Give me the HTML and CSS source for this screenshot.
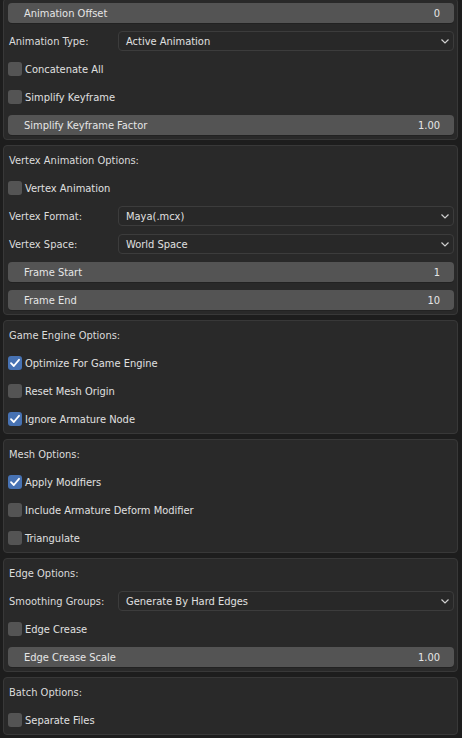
FILE: index.html
```html
<!DOCTYPE html>
<html>
<head>
<meta charset="utf-8">
<link rel="stylesheet" href="styles.css">
</head>
<body>
<div class="panel">
  <div class="box first">
    <div class="row"><div class="num"><span>Animation Offset</span><span>0</span></div></div>
    <div class="row"><span class="label">Animation Type:</span><div class="select"><span>Active Animation</span><svg class="chev" width="8" height="5" viewBox="0 0 8 5"><polyline points="0.5,0.5 4,4 7.5,0.5" /></svg></div></div>
    <div class="row"><span class="cb"></span><span class="cbl">Concatenate All</span></div>
    <div class="row"><span class="cb"></span><span class="cbl">Simplify Keyframe</span></div>
    <div class="row"><div class="num"><span>Simplify Keyframe Factor</span><span>1.00</span></div></div>
  </div>
  <div class="box">
    <div class="row"><span class="head">Vertex Animation Options:</span></div>
    <div class="row"><span class="cb"></span><span class="cbl">Vertex Animation</span></div>
    <div class="row"><span class="label">Vertex Format:</span><div class="select"><span>Maya(.mcx)</span><svg class="chev" width="8" height="5" viewBox="0 0 8 5"><polyline points="0.5,0.5 4,4 7.5,0.5" /></svg></div></div>
    <div class="row"><span class="label">Vertex Space:</span><div class="select"><span>World Space</span><svg class="chev" width="8" height="5" viewBox="0 0 8 5"><polyline points="0.5,0.5 4,4 7.5,0.5" /></svg></div></div>
    <div class="row"><div class="num"><span>Frame Start</span><span>1</span></div></div>
    <div class="row"><div class="num"><span>Frame End</span><span>10</span></div></div>
  </div>
  <div class="box">
    <div class="row"><span class="head">Game Engine Options:</span></div>
    <div class="row"><span class="cb on"><svg width="14" height="14" viewBox="0 0 14 14"><polyline points="3,7.2 5.8,10 11,3.8" /></svg></span><span class="cbl">Optimize For Game Engine</span></div>
    <div class="row"><span class="cb"></span><span class="cbl">Reset Mesh Origin</span></div>
    <div class="row"><span class="cb on"><svg width="14" height="14" viewBox="0 0 14 14"><polyline points="3,7.2 5.8,10 11,3.8" /></svg></span><span class="cbl">Ignore Armature Node</span></div>
  </div>
  <div class="box">
    <div class="row"><span class="head">Mesh Options:</span></div>
    <div class="row"><span class="cb on"><svg width="14" height="14" viewBox="0 0 14 14"><polyline points="3,7.2 5.8,10 11,3.8" /></svg></span><span class="cbl">Apply Modifiers</span></div>
    <div class="row"><span class="cb"></span><span class="cbl">Include Armature Deform Modifier</span></div>
    <div class="row"><span class="cb"></span><span class="cbl">Triangulate</span></div>
  </div>
  <div class="box">
    <div class="row"><span class="head">Edge Options:</span></div>
    <div class="row"><span class="label">Smoothing Groups:</span><div class="select"><span>Generate By Hard Edges</span><svg class="chev" width="8" height="5" viewBox="0 0 8 5"><polyline points="0.5,0.5 4,4 7.5,0.5" /></svg></div></div>
    <div class="row"><span class="cb"></span><span class="cbl">Edge Crease</span></div>
    <div class="row"><div class="num"><span>Edge Crease Scale</span><span>1.00</span></div></div>
  </div>
  <div class="box">
    <div class="row"><span class="head">Batch Options:</span></div>
    <div class="row"><span class="cb"></span><span class="cbl">Separate Files</span></div>
  </div>
</div>
</body>
</html>
```
FILE: styles.css
```css
html, body {
  margin: 0;
  padding: 0;
  background: #1d1d1d;
  overflow: hidden;
}
body {
  font-family: "DejaVu Sans Condensed", "DejaVu Sans", sans-serif;
  font-stretch: condensed;
  font-size: 11px;
  color: #e0e0e0;
  height: 738px;
}
.panel {
  display: flex;
  flex-direction: column;
  gap: 5px;
  padding: 0 4px 0 3px;
}
.box {
  background: #292929;
  border: 1px solid #383838;
  border-radius: 4px;
  padding: 0 3px 0 4px;
}
.box.first {
  margin-top: -2px;
}
.row {
  height: 28px;
  display: flex;
  align-items: center;
}
.head {
  padding-left: 1px;
  color: #dcdcdc;
}
.label {
  width: 110px;
  flex: none;
  padding-left: 1px;
  box-sizing: border-box;
  color: #dcdcdc;
}
.num {
  flex: 1;
  height: 20px;
  background: #545454;
  border-radius: 4px;
  box-shadow: 0 1px 0 #222;
  display: flex;
  align-items: center;
  justify-content: space-between;
  padding: 0 14px 0 16px;
  color: #e6e6e6;
}
.select {
  flex: 1;
  height: 20px;
  box-sizing: border-box;
  background: #282828;
  border: 1px solid #3c3c3c;
  border-radius: 4px;
  display: flex;
  align-items: center;
  justify-content: space-between;
  padding: 0 4px 0 7px;
  color: #e0e0e0;
}
.chev polyline {
  fill: none;
  stroke: #d0d0d0;
  stroke-width: 1.2;
}
.cb {
  width: 14px;
  height: 14px;
  border-radius: 3px;
  background: #545454;
  flex: none;
  display: flex;
}
.cb.on {
  background: #4772b3;
}
.cb svg polyline {
  fill: none;
  stroke: #ffffff;
  stroke-width: 1.8;
  stroke-linecap: round;
  stroke-linejoin: round;
}
.cbl {
  margin-left: 3px;
}
```
